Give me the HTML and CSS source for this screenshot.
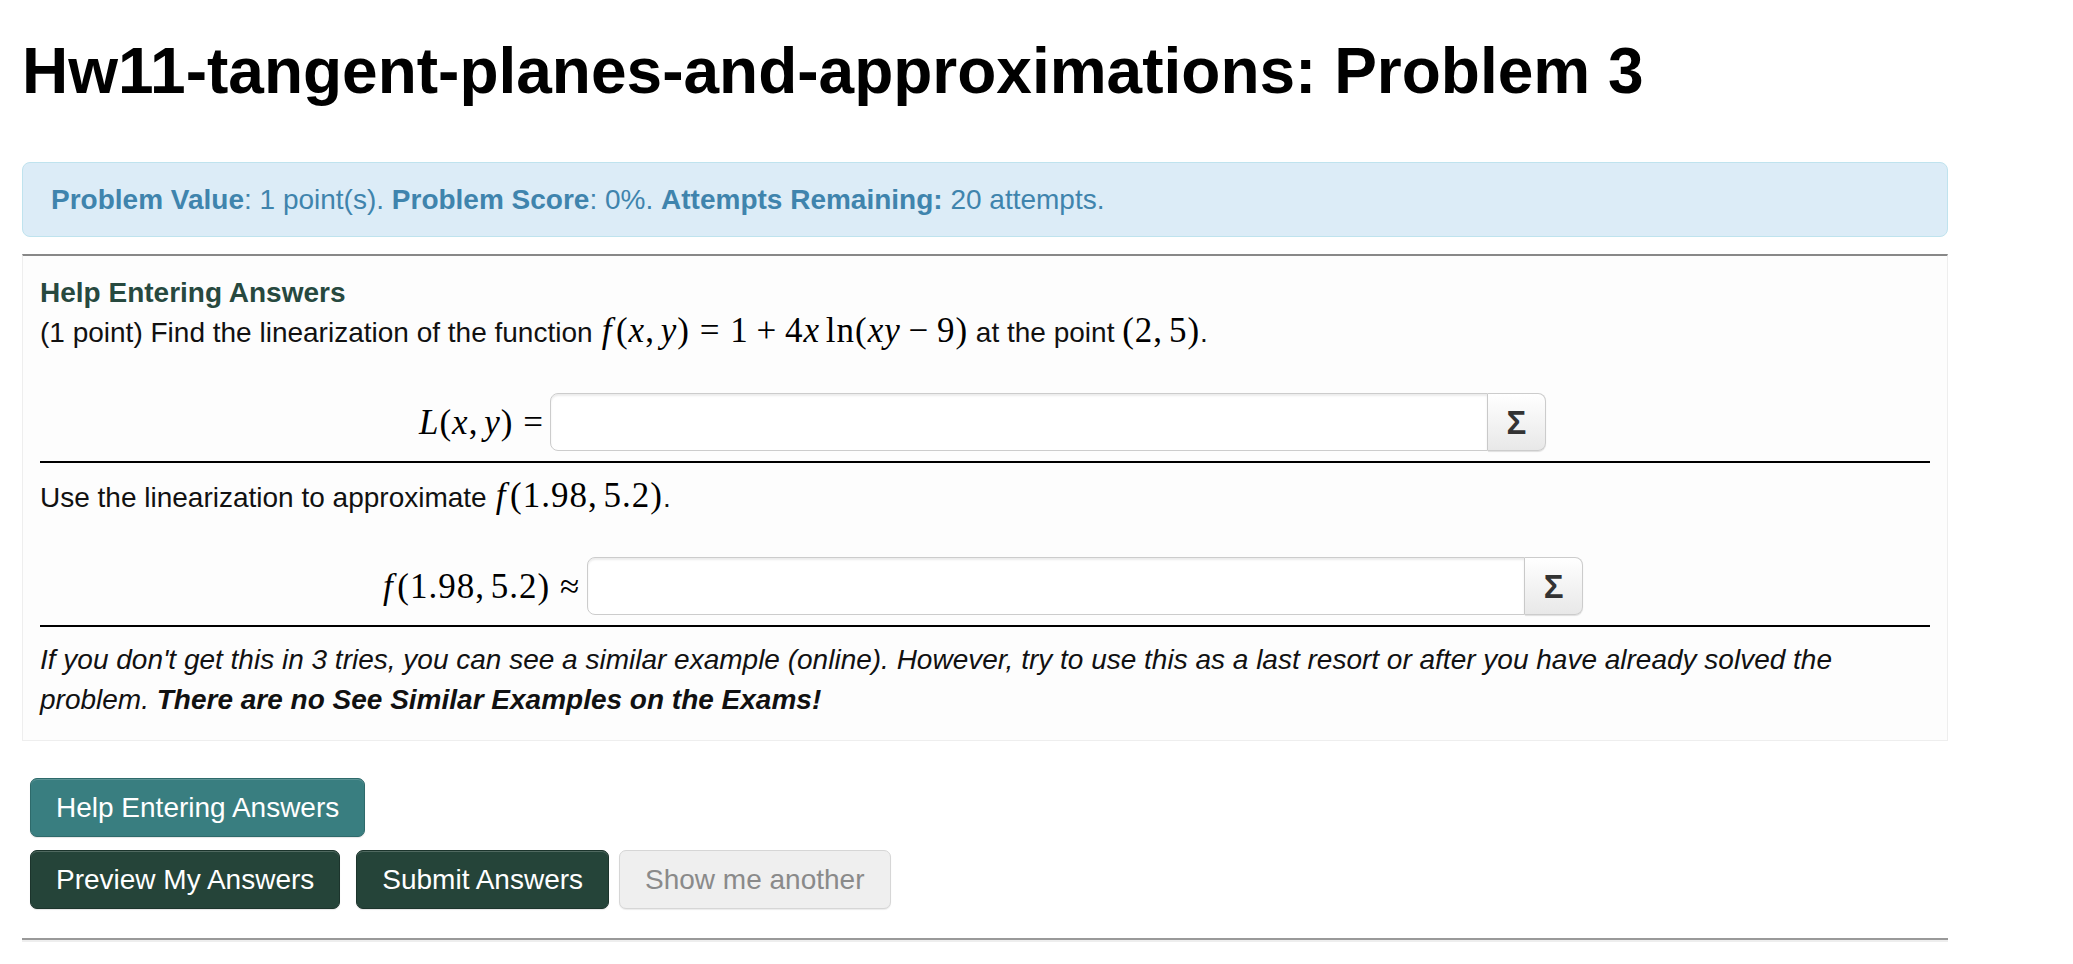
FILE: index.html
```
<!DOCTYPE html>
<html lang="en">
<head>
<meta charset="utf-8">
<title>Hw11-tangent-planes-and-approximations: Problem 3</title>
<link rel="stylesheet" href="styles.css">
</head>
<body>
<div class="page">
  <h1 class="title">Hw11-tangent-planes-and-approximations: Problem 3</h1>

  <div class="alert">
    <b>Problem Value</b>: 1 point(s). <b>Problem Score</b>: 0%. <b>Attempts Remaining:</b> 20 attempts.
  </div>

  <div class="problem">
    <div class="help-link">Help Entering Answers</div>
    <div class="text">(1 point) Find the linearization of the function <span class="m"><i class="f">f</i>(<i>x</i>,<span class="th"></span><i>y</i>)<span class="rel">=</span>1<span class="bin">+</span>4<i>x</i><span class="th"></span>ln(<i>x</i><i>y</i><span class="bin">−</span>9)</span> at the point <span class="m">(2,<span class="th"></span>5)</span>.</div>

    <div class="answer-row">
      <span class="m label"><i>L</i>(<i>x</i>,<span class="th"></span><i>y</i>)<span class="rel-end">=</span></span>
      <div class="input-group"><span class="input"></span><span class="sigma">Σ</span></div>
    </div>
    <div class="rule"></div>

    <div class="text text-gap">Use the linearization to approximate <span class="m"><i class="f">f</i>(1.98,<span class="th"></span>5.2)</span>.</div>

    <div class="answer-row row-gap">
      <span class="m label label-approx"><i class="f">f</i>(1.98,<span class="th"></span>5.2)<span class="rel-end">≈</span></span>
      <div class="input-group"><span class="input"></span><span class="sigma">Σ</span></div>
    </div>
    <div class="rule"></div>

    <p class="note">If you don't get this in 3 tries, you can see a similar example (online). However, try to use this as a last resort or after you have already solved the<br>problem. <b>There are no See Similar Examples on the Exams!</b></p>
  </div>

  <div class="button-row first-row">
    <span class="btn btn-teal">Help Entering Answers</span>
  </div>
  <div class="button-row second-row">
    <span class="btn btn-dark gap-16">Preview My Answers</span>
    <span class="btn btn-dark gap-10">Submit Answers</span>
    <span class="btn btn-light">Show me another</span>
  </div>

  <div class="bottom-rule"></div>
</div>
</body>
</html>
```

FILE: styles.css
```
* { box-sizing: border-box; }

body {
  margin: 0;
  background: #ffffff;
  color: #111111;
  font-family: "Liberation Sans", Arial, Helvetica, sans-serif;
  font-size: 28px;
  line-height: 40px;
}

.page {
  margin-left: 22px;
  width: 1926px;
}

.title {
  margin: 36px 0 56px 0;
  font-size: 64px;
  line-height: 70px;
  font-weight: bold;
  color: #000000;
}

.alert {
  margin-bottom: 17px;
  padding: 17px 28px 16px 28px;
  background: #dcecf7;
  border: 1px solid #bfe3ee;
  border-radius: 8px;
  color: #3f84ad;
}

.problem {
  background: #fdfdfd;
  border: 1px solid #eeeeee;
  border-top: 2px solid #888888;
  padding: 17px 17px 20px 17px;
}

.help-link {
  font-weight: bold;
  color: #27493f;
}

.text { color: #111111; }

.m {
  font-family: "Liberation Serif", "Times New Roman", serif;
  font-size: 35px;
  line-height: 1;
  letter-spacing: 1px;
  white-space: nowrap;
  color: #000000;
}

.m i { font-style: italic; }
.m .f { margin-left: 0.04em; margin-right: 0.1em; }
.th { display: inline-block; width: 0.167em; }
.rel { margin: 0 0.28em; }
.bin { margin: 0 0.22em; }
.rel-end { margin-left: 0.28em; }

.answer-row {
  margin-top: 40px;
  height: 58px;
  display: flex;
  justify-content: center;
  align-items: center;
  padding-right: 5px;
}

.row-gap { margin-top: 39px; }

.label { margin-right: 6px; }
.label-approx { margin-right: 7px; }

.input-group {
  display: flex;
  height: 58px;
}

.input {
  width: 938px;
  height: 58px;
  background: #ffffff;
  border: 1px solid #cccccc;
  border-radius: 8px 0 0 8px;
  box-shadow: inset 0 2px 2px rgba(0, 0, 0, 0.08);
}

.sigma {
  width: 58px;
  height: 58px;
  display: flex;
  align-items: center;
  justify-content: center;
  border: 1px solid #cccccc;
  border-left: none;
  border-radius: 0 8px 8px 0;
  background: linear-gradient(#ffffff, #e8e8e8);
  box-shadow: 0 1px 1px rgba(0, 0, 0, 0.12);
  color: #333333;
  font-family: "Liberation Sans", Arial, sans-serif;
  font-weight: bold;
  font-size: 33px;
  line-height: 1;
}

.rule {
  margin-top: 10px;
  height: 2px;
  background: #000000;
}

.text-gap { margin-top: 15px; }

.note {
  margin: 13px 0 0 0;
  font-style: italic;
  color: #111111;
}

.button-row {
  display: flex;
  padding-left: 8px;
}

.first-row { margin-top: 37px; }
.second-row { margin-top: 13px; }

.btn {
  display: inline-flex;
  align-items: center;
  height: 59px;
  padding: 0 25px;
  border: 1px solid;
  border-radius: 7px;
  font-size: 28px;
  color: #ffffff;
  white-space: nowrap;
}

.btn-teal {
  background: #397e80;
  border-color: #2e6a6b;
  box-shadow: inset 0 1px 0 rgba(255, 255, 255, 0.18), 0 1px 1px rgba(0, 0, 0, 0.1);
}

.btn-dark {
  background: #254439;
  border-color: #1c342c;
  box-shadow: inset 0 1px 0 rgba(255, 255, 255, 0.2), 0 1px 1px rgba(0, 0, 0, 0.1);
}

.btn-light {
  background: #efefef;
  border-color: #d6d6d6;
  color: #8a8a8a;
  box-shadow: 0 1px 1px rgba(0, 0, 0, 0.08);
}

.gap-16 { margin-right: 16px; }
.gap-10 { margin-right: 10px; }

.bottom-rule {
  margin-top: 29px;
  height: 4px;
  border-top: 2px solid #999999;
  border-bottom: 2px solid #eeeeee;
}
```
